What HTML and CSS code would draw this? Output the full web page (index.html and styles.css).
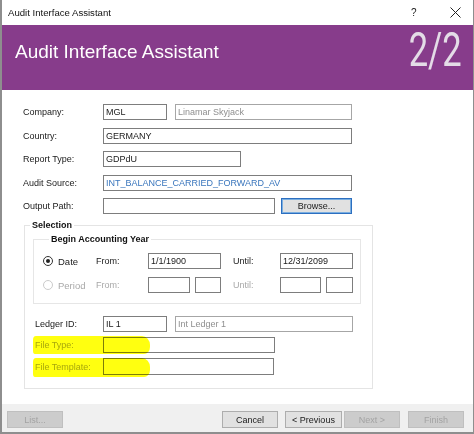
FILE: index.html
```html
<!DOCTYPE html>
<html lang="en">
<head>
    <meta charset="UTF-8">
    <title>Audit Interface Assistant</title>
    <link rel="stylesheet" href="styles.css">
</head>
<body>
    <div class="window">
        <!-- Title bar -->
        <div class="titlebar">
            <span class="titlebar-text">Audit Interface Assistant</span>
            <span class="titlebar-help">?</span>
            <span class="titlebar-close">
                <svg width="11" height="11" viewBox="0 0 11 11"><path d="M0.5 0.5 L10.5 10.5 M10.5 0.5 L0.5 10.5" stroke="#222" stroke-width="1" fill="none"/></svg>
            </span>
        </div>

        <!-- Banner -->
        <div class="banner">
            <div class="banner-title">Audit Interface Assistant</div>
            <div class="banner-step">2/2</div>
        </div>

        <!-- Form -->
        <div class="form">
            <div class="rows">
                <label class="lbl">Company:</label>
                <div class="fields">
                    <div class="box w64">MGL</div>
                    <div class="box box-ro w177">Linamar Skyjack</div>
                </div>

                <label class="lbl">Country:</label>
                <div class="fields">
                    <div class="box w249">GERMANY</div>
                </div>

                <label class="lbl">Report Type:</label>
                <div class="fields">
                    <div class="box w138">GDPdU</div>
                </div>

                <label class="lbl">Audit Source:</label>
                <div class="fields">
                    <div class="box box-blue w249">INT_BALANCE_CARRIED_FORWARD_AV</div>
                </div>

                <label class="lbl">Output Path:</label>
                <div class="fields gap6">
                    <div class="box w172"></div>
                    <button class="btn btn-focus">Browse...</button>
                </div>
            </div>

            <fieldset class="group">
                <legend>Selection</legend>

                <fieldset class="subgroup">
                    <legend>Begin Accounting Year</legend>
                    <div class="year-grid">
                        <div class="radio-cell"><span class="radio checked"></span>Date</div>
                        <div class="ylbl">From:</div>
                        <div class="fields"><div class="box w73">1/1/1900</div></div>
                        <div class="ylbl until">Until:</div>
                        <div class="fields"><div class="box w73">12/31/2099</div></div>

                        <div class="radio-cell off"><span class="radio"></span>Period</div>
                        <div class="ylbl off">From:</div>
                        <div class="fields gap5"><div class="box w42"></div><div class="box w26"></div></div>
                        <div class="ylbl until off">Until:</div>
                        <div class="fields gap5"><div class="box w41"></div><div class="box w27"></div></div>
                    </div>
                </fieldset>

                <div class="rows rows-inner">
                    <label class="lbl">Ledger ID:</label>
                    <div class="fields">
                        <div class="box w64">IL 1</div>
                        <div class="box box-ro w178">Int Ledger 1</div>
                    </div>

                    <label class="lbl off marked">File Type:<span class="marker m1"></span></label>
                    <div class="fields">
                        <div class="box w172"></div>
                    </div>

                    <label class="lbl off marked">File Template:<span class="marker m2"></span></label>
                    <div class="fields">
                        <div class="box w171 tall"></div>
                    </div>
                </div>
            </fieldset>
        </div>

        <!-- Footer buttons -->
        <div class="footer">
            <button class="btn btn-off">List...</button>
            <div class="spacer"></div>
            <button class="btn">Cancel</button>
            <button class="btn prev">&lt; Previous</button>
            <button class="btn btn-off next">Next &gt;</button>
            <button class="btn btn-off finish">Finish</button>
        </div>
    </div>
</body>
</html>
```

FILE: styles.css
```css
html, body {
    margin: 0;
    padding: 0;
    width: 474px;
    height: 434px;
    overflow: hidden;
    background: #8e8e8e;
}
.window {
    margin-left: 2px;
    width: 471px;
    height: 432px;
    background: #ffffff;
    display: flex;
    flex-direction: column;
    font-family: "Liberation Sans", Arial, sans-serif;
    font-size: 9px;
    color: #1a1a1a;
}

/* title bar */
.titlebar {
    height: 25px;
    display: flex;
    align-items: center;
    padding-left: 6px;
    flex-shrink: 0;
    line-height: 12px;
}
.titlebar-text {
    font-size: 9.6px;
    color: #111;
    flex: 1;
}
.titlebar-help {
    font-size: 10px;
    width: 12px;
    margin-right: 27px;
}
.titlebar-close {
    display: flex;
    margin-right: 12px;
}

/* banner */
.banner {
    height: 65px;
    background: #873c8b;
    display: flex;
    justify-content: space-between;
    align-items: flex-start;
    flex-shrink: 0;
}
.banner-title {
    color: #ffffff;
    font-size: 19px;
    line-height: 22px;
    padding-left: 13px;
    padding-top: 16px;
}
.banner-step {
    color: #e4dce7;
    font-family: Roboto, "Liberation Sans", sans-serif;
    font-weight: 400;
    font-size: 48px;
    line-height: normal;
    margin-top: -4px;
    margin-right: 11px;
    transform: scaleX(0.72);
    transform-origin: right center;
}

/* form */
.form {
    flex: 1;
    padding: 14px 0 0 21px;
}
.rows {
    display: grid;
    grid-template-columns: 80px auto;
    row-gap: 7.5px;
    align-items: center;
}
.lbl {
    line-height: 16px;
}
.fields {
    display: flex;
    gap: 8px;
}
.fields.gap6 { gap: 6px; }
.fields.gap5 { gap: 5px; }
.box {
    height: 16px;
    box-sizing: border-box;
    border: 1px solid #7d7d7d;
    background: #fff;
    padding-left: 2px;
    line-height: 14px;
    white-space: nowrap;
    overflow: hidden;
}
.box.tall { height: 17px; }
.box-ro {
    border-color: #a6a6a6;
    color: #8f8f8f;
}
.box-blue { color: #3a76bd; }
.w26 { width: 26px; }
.w27 { width: 27px; }
.w41 { width: 41px; }
.w42 { width: 42px; }
.w64 { width: 64px; }
.w73 { width: 73px; }
.w138 { width: 138px; }
.w171 { width: 171px; }
.w172 { width: 172px; }
.w177 { width: 177px; }
.w178 { width: 178px; }
.w249 { width: 249px; }

/* buttons */
.btn {
    height: 17px;
    width: 56px;
    box-sizing: border-box;
    border: 1px solid #adadad;
    background: #e1e1e1;
    font-family: "Liberation Sans", Arial, sans-serif;
    font-size: 9px;
    color: #1a1a1a;
    padding: 0;
}
.btn-focus {
    width: 71px;
    height: 16px;
    border: 1px solid #2c6fc0;
    box-shadow: inset 0 0 0 1px #7aaee0;
}
.btn-off {
    background: #cccccc;
    border-color: #bfbfbf;
    color: #a3a3a3;
}

/* group boxes */
.group {
    margin: 5px 0 0 1px;
    padding: 2px 0 13px 0;
    width: 349px;
    box-sizing: border-box;
    border: 1px solid #e4e4e4;
}
.group legend,
.subgroup legend {
    font-weight: bold;
    line-height: 12px;
    padding: 0 2px;
    margin-left: 5px;
    color: #111;
}
.subgroup {
    margin: 0 0 0 8px;
    padding: 8px 0 10px 9px;
    width: 328px;
    box-sizing: border-box;
    border: 1px solid #e6e6e6;
}
.subgroup legend { margin-left: 6px; }

.year-grid {
    display: grid;
    grid-template-columns: 53px 52px 73px 12px 47px 73px;
    row-gap: 8px;
    align-items: center;
}
.year-grid .until { grid-column: 5; }
.radio-cell {
    display: flex;
    align-items: center;
    gap: 5px;
    font-size: 9.5px;
}
.radio {
    width: 10px;
    height: 10px;
    box-sizing: border-box;
    border: 1px solid #333;
    border-radius: 50%;
    display: flex;
    align-items: center;
    justify-content: center;
}
.radio.checked::after {
    content: "";
    width: 4px;
    height: 4px;
    border-radius: 50%;
    background: #222;
}
.off { color: #a8a8a8; }
.off .radio { border-color: #cbcbcb; }

.rows-inner {
    margin-top: 12px;
    padding-left: 10px;
    grid-template-columns: 68px auto;
    row-gap: 5px;
}

/* yellow highlighter */
.marked { position: relative; }
.marker {
    position: absolute;
    left: -2px;
    width: 117px;
    height: 18px;
    top: -1px;
    background: #ffff10;
    mix-blend-mode: multiply;
    border-radius: 3px 8px 6px 2px / 4px 9px 7px 3px;
}
.m2 { height: 19px; }

/* footer */
.footer {
    height: 28px;
    background: #f0f0f0;
    display: flex;
    align-items: flex-start;
    padding: 7px 9px 0 5px;
    box-sizing: border-box;
    flex-shrink: 0;
}
.spacer { flex: 1; }
.prev { margin-left: 7px; width: 57px; }
.next { margin-left: 2px; }
.finish { margin-left: 8px; }
```
